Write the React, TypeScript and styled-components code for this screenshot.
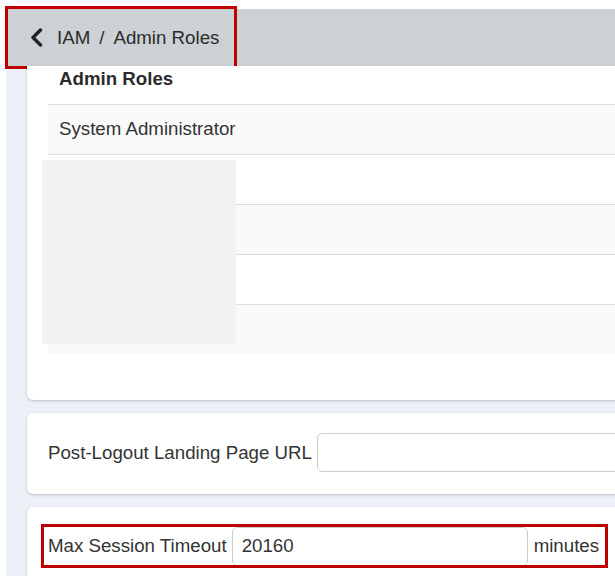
import React from 'react';
import styled, { createGlobalStyle } from 'styled-components';

const GlobalStyle = createGlobalStyle`
  html, body {
    margin: 0;
    padding: 0;
    background: #ffffff;
    overflow: hidden;
  }
  body {
    font-family: "Liberation Sans", Arial, sans-serif;
    color: #333333;
  }
`;

const Frame = styled.div`
  margin: 9px 0 0 6px;
  width: 660px;
  min-height: 600px;
  background: #eef0f8;
`;

const Header = styled.div`
  display: flex;
  align-items: stretch;
  height: 57px;
  margin-left: 2px;
  background: #cbd1d4;
`;

const Breadcrumb = styled.div`
  display: flex;
  align-items: center;
  gap: 13px;
  padding: 0 15px 0 21px;
  outline: 3px solid #c00000;
  font-size: 18.7px;
  color: #2b2b2b;
`;

const Separator = styled.span`
  margin: 0 9px;
`;

const Content = styled.div`
  display: flex;
  flex-direction: column;
  gap: 13px;
  padding-left: 21px;
`;

const Card = styled.div<{ $top?: number; $bottomless?: boolean }>`
  position: relative;
  background: #ffffff;
  border-radius: ${p => (p.$bottomless ? '6px 6px 0 0' : p.$top === 0 ? '0 0 6px 6px' : '6px')};
  box-shadow: 0 1px 3px rgba(0, 0, 0, 0.22);
  padding: ${p => p.$top ?? 20}px 0 0 21px;
`;

const Table = styled.table`
  width: 100%;
  border-collapse: collapse;
  font-size: 18.7px;
  color: #333333;
`;

const HeadRow = styled.tr`
  height: 38px;
`;

const Th = styled.th`
  padding: 0 11px 12px;
  text-align: left;
  font-weight: 700;
  color: #2b2b2b;
`;

const Tr = styled.tr<{ $striped?: boolean }>`
  height: 50px;
  background: ${p => (p.$striped ? '#f9f9f9' : '#ffffff')};
  border-top: 1px solid #dddddd;
`;

const Td = styled.td`
  padding: 0 11px;
`;

const Placeholder = styled.div`
  position: absolute;
  left: 15px;
  top: 94px;
  width: 194px;
  height: 184px;
  background: #f2f2f2;
`;

const TableSpacer = styled.div`
  height: 46px;
`;

const FieldRow = styled.div<{ $highlight?: boolean }>`
  display: flex;
  align-items: center;
  gap: 5px;
  height: ${p => (p.$highlight ? 38 : 39)}px;
  padding-left: ${p => (p.$highlight ? 4 : 0)}px;
  margin-left: ${p => (p.$highlight ? -4 : 0)}px;
  width: ${p => (p.$highlight ? '557px' : 'auto')};
  outline: ${p => (p.$highlight ? '3px solid #c00000' : 'none')};
  font-size: 18.7px;
  color: #333333;
`;

const Label = styled.span`
  white-space: nowrap;
`;

const Input = styled.input<{ $width: number }>`
  box-sizing: border-box;
  width: ${p => p.$width}px;
  height: 39px;
  padding: 0 9px;
  border: 1px solid #cccccc;
  border-radius: 5px;
  background: #ffffff;
  font-family: "Liberation Sans", Arial, sans-serif;
  font-size: 18.7px;
  color: #333333;
  outline: none;
`;

const Unit = styled.span`
  margin-left: 1px;
`;

const CardGap = styled.div`
  height: 22px;
`;

const BackIcon = () => (
  <svg width="15" height="19" viewBox="0 0 15 19">
    <polyline
      points="11.5,2 4,9.5 11.5,17"
      fill="none"
      stroke="#222222"
      strokeWidth="3.4"
      strokeLinecap="round"
      strokeLinejoin="round"
    />
  </svg>
);

const roles = ['System Administrator', '', '', '', ''];

export default function App() {
  return (
    <>
      <GlobalStyle />
      <Frame>
        <Header>
          <Breadcrumb>
            <BackIcon />
            <span>
              IAM<Separator>/</Separator>Admin Roles
            </span>
          </Breadcrumb>
        </Header>
        <Content>
          <Card $top={0}>
            <Table>
              <thead>
                <HeadRow>
                  <Th>Admin Roles</Th>
                </HeadRow>
              </thead>
              <tbody>
                {roles.map((role, i) => (
                  <Tr key={i} $striped={i % 2 === 0}>
                    <Td>{role}</Td>
                  </Tr>
                ))}
              </tbody>
            </Table>
            <TableSpacer />
            <Placeholder />
          </Card>
          <Card>
            <FieldRow>
              <Label>Post-Logout Landing Page URL</Label>
              <Input $width={320} defaultValue="" />
            </FieldRow>
            <CardGap />
          </Card>
          <Card $bottomless>
            <FieldRow $highlight>
              <Label>Max Session Timeout</Label>
              <Input $width={296} defaultValue="20160" />
              <Unit>minutes</Unit>
            </FieldRow>
            <CardGap />
          </Card>
        </Content>
      </Frame>
    </>
  );
}
